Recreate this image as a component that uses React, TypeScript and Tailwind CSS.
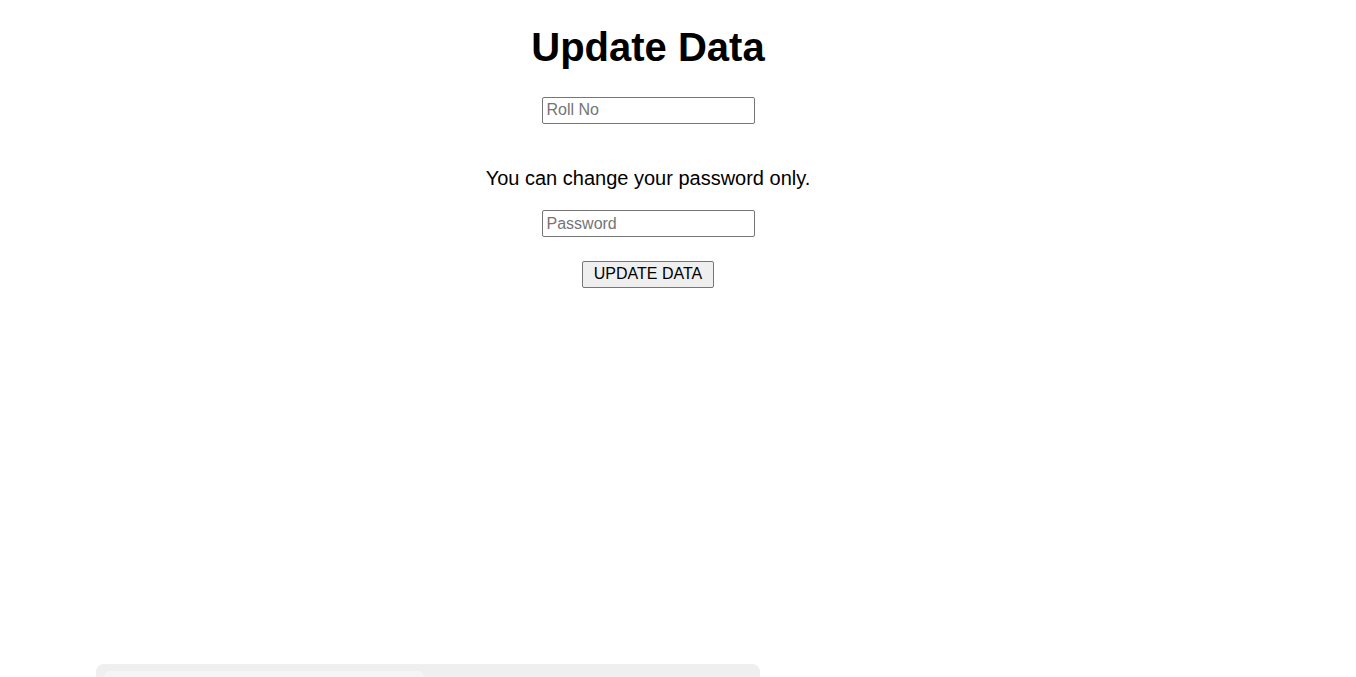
export default function App() {
  return (
    <div className="min-h-screen bg-white font-['Liberation_Sans',Arial,sans-serif] text-black">
      <div className="flex w-[1296px] flex-col items-center pt-[24px]">
        <h1 className="text-[40px] font-bold leading-[46px]">Update Data</h1>
        <input
          type="text"
          placeholder="Roll No"
          className="mt-[27px] h-[27px] w-[213px] rounded-[2px] border border-[#767676] px-[4px] pb-[2px] text-[16px] leading-[20px] outline-none placeholder:text-[#757575]"
        />
        <p className="mt-[42px] text-[20px] leading-[24px]">
          You can change your password only.
        </p>
        <input
          type="password"
          placeholder="Password"
          className="mt-[20px] h-[27px] w-[213px] rounded-[2px] border border-[#767676] px-[4px] text-[16px] leading-[20px] outline-none placeholder:text-[#757575]"
        />
        <button
          type="button"
          className="mt-[24px] h-[27px] w-[132px] rounded-[2px] border border-[#767676] bg-[#efefef] pb-[2px] text-[16px] leading-[20px]"
        >
          UPDATE DATA
        </button>
      </div>
      <div className="ml-[96px] mt-[376px] h-[40px] w-[664px] overflow-hidden rounded-t-[8px] bg-[#efefef] pl-[8px] pt-[7px]">
        <div className="h-full w-[320px] rounded-t-[6px] bg-[#f5f5f5]" />
      </div>
    </div>
  );
}
